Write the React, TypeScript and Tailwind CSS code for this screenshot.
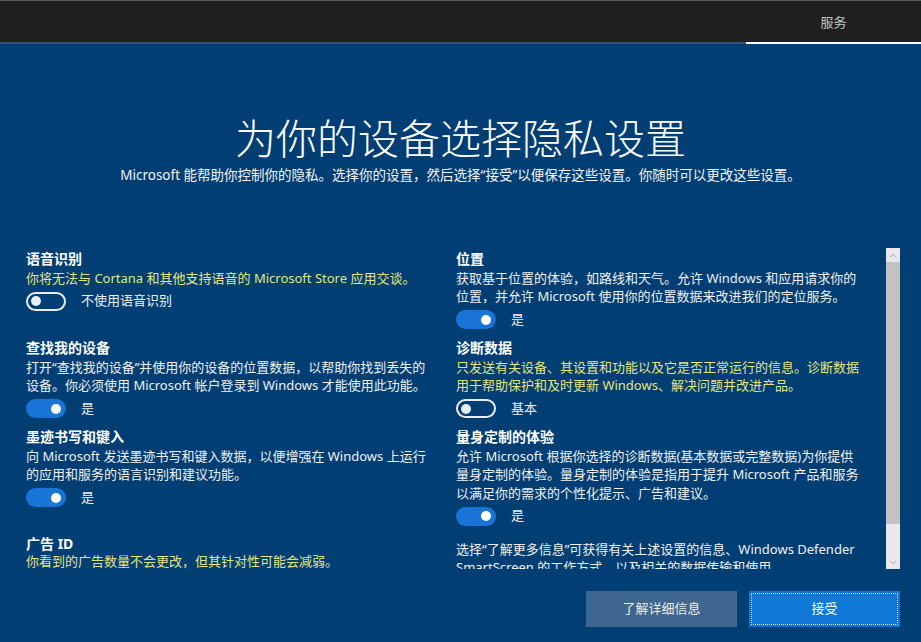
import React from "react";

const FONT = { fontFamily: "'Noto Sans', 'Noto Sans CJK SC', sans-serif" };

function Toggle({ on, label }: { on: boolean; label: string }) {
  return (
    <div className="mt-[5px] flex h-[18px] items-center gap-[15px]">
      {on ? (
        <div className="flex h-[19px] w-[40px] items-center justify-end rounded-full bg-[#1874d6] pr-[5px]">
          <div className="h-[10px] w-[10px] rounded-full bg-white" />
        </div>
      ) : (
        <div className="flex h-[19px] w-[40px] items-center justify-start rounded-full border-2 border-[#e8eef5] pl-[3px]">
          <div className="h-[10px] w-[10px] rounded-full bg-[#e8eef5]" />
        </div>
      )}
      <span className="text-[13px] text-[#f0f0f0]">{label}</span>
    </div>
  );
}

function Section({
  title,
  lines,
  yellow,
  toggle,
  tight,
}: {
  title: string;
  lines: string[];
  yellow?: boolean;
  toggle?: { on: boolean; label: string };
  tight?: boolean;
}) {
  return (
    <div className={"flex flex-col " + (tight ? "-mt-[1px]" : "")}>
      <div className="text-[14px] font-bold leading-[18.5px] text-white">{title}</div>
      <div
        className={
          "whitespace-nowrap text-[13px] " +
          (tight ? "leading-[16.5px] " : "leading-[18.5px] ") +
          (yellow ? "text-[#e4e57c]" : "text-[#f0f0f0]")
        }
      >
        {lines.map((l, i) => (
          <div key={i}>{l}</div>
        ))}
      </div>
      {toggle && <Toggle on={toggle.on} label={toggle.label} />}
    </div>
  );
}

function Chevron({ up }: { up?: boolean }) {
  return (
    <svg width="8" height="5" viewBox="0 0 8 5" className="text-[#a6a6a6]">
      <path
        d={up ? "M1 4.2 L4 1.2 L7 4.2" : "M1 0.8 L4 3.8 L7 0.8"}
        stroke="currentColor"
        strokeWidth="1"
        fill="none"
      />
    </svg>
  );
}

export default function App() {
  return (
    <div style={FONT} className="flex h-[642px] w-[921px] flex-col overflow-hidden bg-[#013e73]">
      {/* top bar */}
      <div className="flex h-[42px] items-stretch border-t border-[#5a5a5a] bg-[#1f1f1f]">
        <div className="flex-1" />
        <div className="flex w-[175px] items-center justify-center pt-[3px] text-[13px] text-[#c4c4c4]">
          服务
        </div>
      </div>
      <div className="flex h-[2px]">
        <div className="flex-1 bg-[#2f5379]" />
        <div className="w-[175px] bg-white" />
      </div>

      {/* title */}
      <div
        className="mt-[68px] text-center text-[41px] font-light leading-[48px] text-white"
        style={{ fontFamily: "'Noto Sans CJK SC', sans-serif" }}
      >
        为你的设备选择隐私设置
      </div>
      <div className="mt-[6px] text-center text-[13.5px] leading-[18px] text-[#f4f4f4]">
        Microsoft 能帮助你控制你的隐私。选择你的设置，然后选择“接受”以便保存这些设置。你随时可以更改这些设置。
      </div>

      {/* settings */}
      <div className="mt-[64px] flex h-[321px]">
        <div className="h-full w-[860px] overflow-hidden pl-[26px] pt-[2px]">
          <div className="grid grid-cols-[410px_416px] gap-x-[20px] gap-y-[10.5px]">
            <Section
              title="语音识别"
              yellow
              lines={["你将无法与 Cortana 和其他支持语音的 Microsoft Store 应用交谈。"]}
              toggle={{ on: false, label: "不使用语音识别" }}
            />
            <Section
              title="位置"
              lines={[
                "获取基于位置的体验，如路线和天气。允许 Windows 和应用请求你的",
                "位置，并允许 Microsoft 使用你的位置数据来改进我们的定位服务。",
              ]}
              toggle={{ on: true, label: "是" }}
            />
            <Section
              title="查找我的设备"
              lines={[
                "打开“查找我的设备”并使用你的设备的位置数据，以帮助你找到丢失的",
                "设备。你必须使用 Microsoft 帐户登录到 Windows 才能使用此功能。",
              ]}
              toggle={{ on: true, label: "是" }}
            />
            <Section
              title="诊断数据"
              yellow
              lines={[
                "只发送有关设备、其设置和功能以及它是否正常运行的信息。诊断数据",
                "用于帮助保护和及时更新 Windows、解决问题并改进产品。",
              ]}
              toggle={{ on: false, label: "基本" }}
            />
            <Section
              title="墨迹书写和键入"
              lines={[
                "向 Microsoft 发送墨迹书写和键入数据，以便增强在 Windows 上运行",
                "的应用和服务的语言识别和建议功能。",
              ]}
              toggle={{ on: true, label: "是" }}
            />
            <Section
              title="量身定制的体验"
              lines={[
                "允许 Microsoft 根据你选择的诊断数据(基本数据或完整数据)为你提供",
                "量身定制的体验。量身定制的体验是指用于提升 Microsoft 产品和服务",
                "以满足你的需求的个性化提示、广告和建议。",
              ]}
              toggle={{ on: true, label: "是" }}
            />
            <Section
              title="广告 ID"
              yellow
              tight
              lines={["你看到的广告数量不会更改，但其针对性可能会减弱。"]}
            />
            <div className="mt-[4px] whitespace-nowrap text-[13px] leading-[18.5px] text-[#f0f0f0]">
              <div>选择“了解更多信息”可获得有关上述设置的信息、Windows Defender</div>
              <div>SmartScreen 的工作方式，以及相关的数据传输和使用。</div>
            </div>
          </div>
        </div>
        {/* scrollbar */}
        <div className="ml-[26px] flex h-full w-[14px] flex-col bg-[#e9e9ed]">
          <div className="flex h-[14px] items-center justify-center">
            <Chevron up />
          </div>
          <div className="h-[262px] bg-[#c2c2c2]" />
          <div className="flex-1" />
          <div className="flex h-[14px] items-center justify-center">
            <Chevron />
          </div>
        </div>
      </div>

      {/* buttons */}
      <div className="mt-[22px] flex justify-end gap-[12px] pr-[21px]">
        <button className="h-[36px] w-[151px] bg-[#3e668f] text-[13px] text-[#ececec]">
          了解详细信息
        </button>
        <button className="flex h-[36px] w-[151px] items-center justify-center bg-[#0f77d7] p-[2px] text-[13px] text-white">
          <div className="flex h-full w-full items-center justify-center border border-dotted border-[#cfe4f7]">
            接受
          </div>
        </button>
      </div>
    </div>
  );
}
